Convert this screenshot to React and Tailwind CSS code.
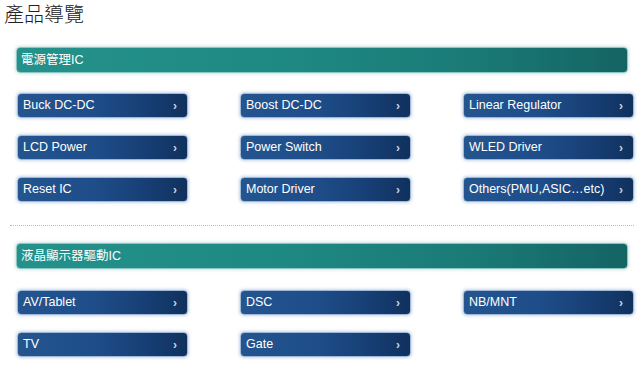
import React from 'react';

const groups = [
  {
    title: '電源管理IC',
    items: ['Buck DC-DC', 'Boost DC-DC', 'Linear Regulator', 'LCD Power', 'Power Switch', 'WLED Driver', 'Reset IC', 'Motor Driver', 'Others(PMU,ASIC…etc)'],
  },
  {
    title: '液晶顯示器驅動IC',
    items: ['AV/Tablet', 'DSC', 'NB/MNT', 'TV', 'Gate'],
  },
];

const font = { fontFamily: '"Liberation Sans", Arial, "Noto Sans CJK TC", sans-serif' };

const ProductButton = ({ label }) => (
  <a
    href="#"
    className="flex h-[25px] w-[171px] items-center justify-between rounded-[4px] border border-[#9fb8d8] bg-[linear-gradient(to_right,#24558f_0%,#1e4d89_45%,#173f75_75%,#10315d_100%)] pl-[5px] pr-[10px] text-[12.5px] text-white shadow-[0_0_3px_1px_rgba(150,180,215,0.55)]"
  >
    <span>{label}</span>
    <span className="text-[12px] font-bold text-[#c9d6e8]">›</span>
  </a>
);

const App = () => {
  return (
    <div className="min-h-screen w-[644px] bg-white" style={font}>
      <h1 className="pl-[4px] pt-[3px] text-[20px] font-light leading-[24px] text-[#222]" style={font}>產品導覽</h1>

      {groups.map((group, gi) => (
        <div key={gi} className={gi === 0 ? 'mt-[20px]' : ''}>
          {gi > 0 && <div className="mx-[10px] mt-[23px] border-t border-dotted border-[#bbb]" />}
          {/* section header */}
          <div
            className={`mx-[16px] flex h-[26px] items-center rounded-[4px] border border-[#8cc6c2] bg-[linear-gradient(to_right,#24918a_0%,#1f8a84_40%,#1a7a76_75%,#146463_100%)] pl-[4px] text-[12.5px] text-white shadow-[0_0_3px_1px_rgba(160,200,200,0.5)] ${gi > 0 ? 'mt-[17px]' : ''}`}
          >
            {group.title}
          </div>

          <div className={`ml-[17px] grid grid-cols-[171px_171px_171px] gap-x-[52px] gap-y-[17px] ${gi > 0 ? 'mt-[21px]' : 'mt-[20px]'}`}>
            {group.items.map((item) => (
              <ProductButton key={item} label={item} />
            ))}
          </div>
        </div>
      ))}
    </div>
  );
};

export default App;
